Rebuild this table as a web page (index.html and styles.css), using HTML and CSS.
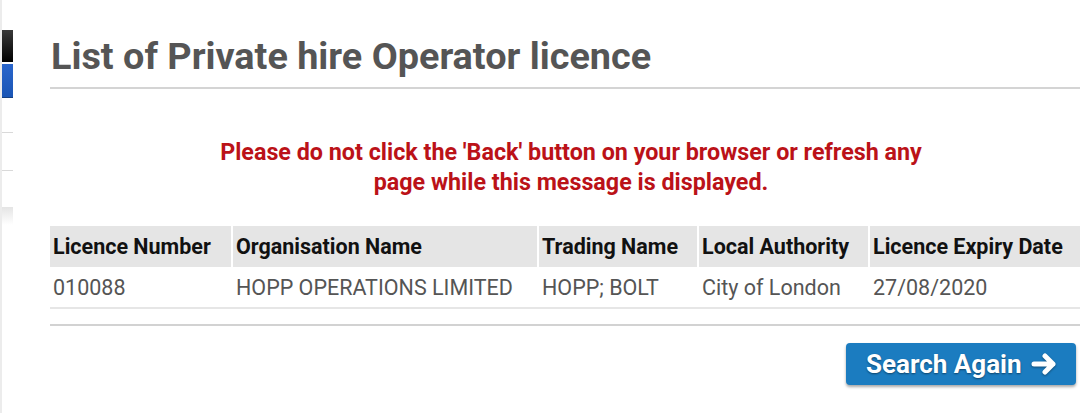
FILE: index.html
```html
<!DOCTYPE html>
<html>
<head>
<meta charset="utf-8">
<link rel="stylesheet" href="styles.css">
</head>
<body>
<div class="page">
  <aside class="side">
    <div class="side-dark"></div>
    <div class="side-blue"></div>
    <div class="side-line l1"></div>
    <div class="side-line l2"></div>
    <div class="side-fade"></div>
  </aside>
  <main class="main">
    <h1 class="title">List of Private hire Operator licence</h1>
    <p class="warn">Please do not click the 'Back' button on your browser or refresh any<br>page while this message is displayed.</p>
    <table class="results">
      <thead>
        <tr>
          <th class="c1">Licence Number</th>
          <th class="c2">Organisation Name</th>
          <th class="c3">Trading Name</th>
          <th class="c4">Local Authority</th>
          <th class="c5">Licence Expiry Date</th>
        </tr>
      </thead>
      <tbody>
        <tr>
          <td>010088</td>
          <td>HOPP OPERATIONS LIMITED</td>
          <td>HOPP; BOLT</td>
          <td>City of London</td>
          <td>27/08/2020</td>
        </tr>
      </tbody>
    </table>
    <div class="row-line"></div>
    <div class="rule"></div>
    <div class="actions">
      <button class="btn">Search Again
        <svg class="arrow" width="28" height="24" viewBox="0 0 28 24"><path d="M3 12 H22 M14 4 L22 12 L14 20" fill="none" stroke="#fff" stroke-width="5" stroke-linecap="round" stroke-linejoin="round"/></svg>
      </button>
    </div>
  </main>
</div>
</body>
</html>
```
FILE: styles.css
```css
html, body { margin: 0; padding: 0; background: #fff; }
body { font-family: Roboto, "Noto Sans", sans-serif; overflow: hidden; }
.page { display: flex; width: 1080px; height: 413px; overflow: hidden; }
.side { width: 13px; flex: none; display: flex; flex-direction: column; border-left: 2px solid #ececec; box-sizing: border-box; }
.side-dark { height: 32px; margin-top: 30px; background: linear-gradient(#3a3a3a, #000); }
.side-blue { height: 33px; margin-top: 2px; background: linear-gradient(#2a66cc, #1a55b5); border-bottom: 1px solid #163f80; }
.side-line { height: 1px; background: #d9d9d9; }
.l1 { margin-top: 34px; }
.l2 { margin-top: 37px; }
.side-fade { height: 18px; margin-top: 36px; background: linear-gradient(#e4e4e4, #fff); }
.main { flex: 1; padding-left: 37px; min-width: 0; }
.title { margin: 35px 0 0; font-size: 37.8px; font-weight: 700; color: #555; line-height: 42px; padding-left: 1px; padding-bottom: 10px; border-bottom: 2px solid #d4d4d4; white-space: nowrap; }
.warn { margin: 48px 0 0; padding-left: 12px; text-align: center; color: #bb1218; font-weight: 700; font-size: 23.3px; line-height: 30px; white-space: nowrap; }
.results { margin: 29px 0 0 -2px; border-collapse: separate; border-spacing: 2px 0; font-size: 21.5px; white-space: nowrap; table-layout: fixed; width: 1064px; }
.results th { background: #e5e5e5; color: #111; font-weight: 700; text-align: left; height: 41px; padding: 0 3px; box-sizing: border-box; }
.results td { color: #555; height: 40px; padding: 0 3px; }
.c1 { width: 181px; }
.c2 { width: 304px; }
.c3 { width: 158px; }
.c4 { width: 169px; }
.c5 { width: 240px; }
.row-line { height: 2px; background: #e6e6e6; }
.rule { height: 2px; background: #d2d2d2; margin-top: 15px; }
.actions { display: flex; justify-content: flex-end; padding-right: 4px; margin-top: 17px; }
.btn { width: 230px; height: 42px; border: none; border-radius: 4px; background: #1b7cc0; color: #fff; font-family: Roboto, sans-serif; font-weight: 700; font-size: 26px; display: flex; align-items: center; gap: 9px; padding: 0 0 0 20px; text-shadow: 0 1px 2px rgba(0,0,0,.45); box-shadow: 0 2px 3px rgba(0,0,0,.35); }
.arrow { filter: drop-shadow(0 1px 1px rgba(0,0,0,.4)); }
```
